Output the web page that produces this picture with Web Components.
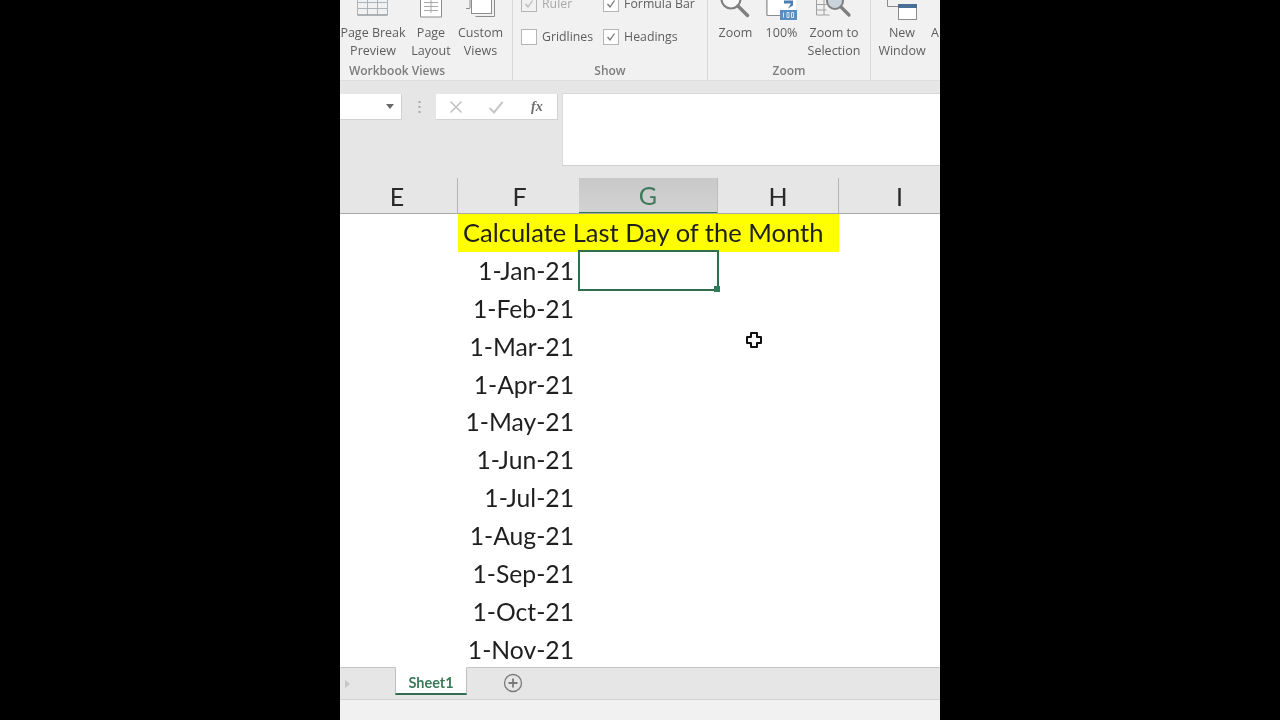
<!DOCTYPE html>
<html>
<head>
<meta charset="utf-8">
<title>Calculate Last Day of the Month</title>
<style>
  html, body { margin:0; height:100%; background:#000; overflow:hidden; }
  body { display:flex; justify-content:center; font-family:"Open Sans","Liberation Sans",sans-serif; }
</style>
</head>
<body>
<excel-app>
  <excel-ribbon>
    <ribbon-group label="Workbook Views" width="173" pad="0" label-pad="58">
      <ribbon-cmd width="66" icon="pagebreak">Page Break<br>Preview</ribbon-cmd>
      <ribbon-cmd width="50" icon="pagelayout">Page<br>Layout</ribbon-cmd>
      <ribbon-cmd width="49" icon="custom">Custom<br>Views</ribbon-cmd>
    </ribbon-group>
    <ribbon-group label="Show" width="195" pad="8">
      <check-col>
        <ribbon-check dim checked>Ruler</ribbon-check>
        <ribbon-check>Gridlines</ribbon-check>
      </check-col>
      <check-col>
        <ribbon-check checked>Formula Bar</ribbon-check>
        <ribbon-check checked>Headings</ribbon-check>
      </check-col>
    </ribbon-group>
    <ribbon-group label="Zoom" width="163" pad="5">
      <ribbon-cmd width="45" icon="zoom">Zoom</ribbon-cmd>
      <ribbon-cmd width="47" icon="hundred">100%</ribbon-cmd>
      <ribbon-cmd width="58" icon="selection">Zoom to<br>Selection</ribbon-cmd>
    </ribbon-group>
    <ribbon-group label="" width="69" pad="3">
      <ribbon-cmd width="56" icon="window">New<br>Window</ribbon-cmd>
      <ribbon-cmd width="10" icon="">A</ribbon-cmd>
    </ribbon-group>
  </excel-ribbon>
  <formula-bar></formula-bar>
  <column-headers></column-headers>
  <sheet-grid>
    <sheet-cell col="2" span="3" fill>Calculate Last Day of the Month</sheet-cell>
    <sheet-cell col="2" right>1-Jan-21</sheet-cell>
    <sheet-cell col="3" selected></sheet-cell>
    <sheet-cell col="2" right>1-Feb-21</sheet-cell>
    <sheet-cell col="2" right>1-Mar-21</sheet-cell>
    <sheet-cell col="2" right>1-Apr-21</sheet-cell>
    <sheet-cell col="2" right>1-May-21</sheet-cell>
    <sheet-cell col="2" right>1-Jun-21</sheet-cell>
    <sheet-cell col="2" right>1-Jul-21</sheet-cell>
    <sheet-cell col="2" right>1-Aug-21</sheet-cell>
    <sheet-cell col="2" right>1-Sep-21</sheet-cell>
    <sheet-cell col="2" right>1-Oct-21</sheet-cell>
    <sheet-cell col="2" right>1-Nov-21</sheet-cell>
  </sheet-grid>
  <sheet-tabs></sheet-tabs>
  <status-strip></status-strip>
</excel-app>

<script>
(() => {
  'use strict';

  const COLS = '118px 121px 139px 121px 121px';
  const CELL_FONT = 'Lato,"Liberation Sans",sans-serif';
  const UI_FONT = '"Open Sans","Liberation Sans",sans-serif';

  // ---------- ribbon icons, the ribbon is cut off by the top of the video ----------
  const ICONS = {
    pagebreak: `<svg width="34" height="16" viewBox="0 0 34 16" fill="none" stroke="#9a9a9a">
      <path d="M1.5 -6h30v21h-30zM1.5 2.5h30M1.5 8.5h30M11.5 -6v21M21.5 -6v21" stroke="#a9b4bd"/>
      <path d="M1.5 15h30" stroke="#8f8f8f"/></svg>`,
    pagelayout: `<svg width="24" height="18" viewBox="0 0 24 18" fill="none">
      <path d="M1.5 -6v23h21v-23" fill="#fff" stroke="#8c8c8c"/>
      <path d="M5 2.5h14M5 6.5h14M5 10.5h14M12 0v13" stroke="#a9a9a9"/></svg>`,
    custom: `<svg width="32" height="17" viewBox="0 0 32 17" fill="none">
      <path d="M1 8.5h4M5 -6v14" stroke="#8c8c8c"/>
      <path d="M10.5 16.5h19v-22" stroke="#8c8c8c"/>
      <rect x="6.5" y="-6" width="20" height="19.5" fill="#fff" stroke="#8c8c8c"/></svg>`,
    zoom: `<svg width="34" height="18" viewBox="0 0 34 18" fill="none" stroke="#7f7f7f">
      <circle cx="12" cy="-1" r="9.5" stroke-width="2.2" fill="#f7f7f7"/>
      <path d="M19 6l9.5 9.5" stroke-width="3.4" stroke-linecap="round"/></svg>`,
    hundred: `<svg width="32" height="21" viewBox="0 0 32 21" fill="none">
      <path d="M1 -6v21.500h14" fill="#fff" stroke="#8c8c8c"/>
      <path d="M1 -6h29v16H16v5.500H1z" fill="#fff"/>
      <path d="M1 -6v21.500h14" stroke="#8c8c8c"/>
      <path d="M18 3.500h7l-3 5 5-3v-5h-9z" fill="#4a7fb5"/>
      <rect x="14" y="10" width="17" height="10" fill="#5a8dc0"/>
      <path d="M17.500 12.500v5M21 12.500h2v5h-2zM25.500 12.500h2v5h-2z" stroke="#e6eef6" stroke-width=".9"/></svg>`,
    selection: `<svg width="38" height="18" viewBox="0 0 38 18" fill="none">
      <path d="M1.500 -4v19h13M1.500 4.500h10M1.500 10h10M9 -4v19" stroke="#a0a0a0"/>
      <circle cx="20" cy="1" r="8" fill="#c9d3dc" stroke="#7f7f7f" stroke-width="2"/>
      <path d="M26 7l8 8" stroke="#7f7f7f" stroke-width="3.200" stroke-linecap="round"/></svg>`,
    window: `<svg width="32" height="21" viewBox="0 0 32 21" fill="none">
      <path d="M1.500 -4v10.500h11" stroke="#8c8c8c"/>
      <path d="M20 -4v4" stroke="#8c8c8c"/>
      <rect x="12.500" y="4.500" width="18" height="15" fill="#fff" stroke="#8c8c8c"/>
      <rect x="12" y="4" width="19" height="4" fill="#4a6f96"/></svg>`
  };

  class ExcelApp extends HTMLElement {
    constructor() {
      super();
      this.attachShadow({ mode: 'open' }).innerHTML = `
        <style>
          :host{
            display:flex; flex-direction:column;
            width:600px; height:720px; overflow:hidden;
            background:#fff; position:relative;
            filter:blur(.45px);
          }
          .cursor{ position:absolute; left:405px; top:331px; }
        </style>
        <slot></slot>
        <svg class="cursor" width="18" height="18" viewBox="0 0 18 18">
          <path d="M6 2h6v4h4v6h-4v4H6v-4H2V6h4z" fill="#fff" stroke="#111" stroke-width="2" stroke-linejoin="round"/>
        </svg>`;
    }
  }

  class ExcelRibbon extends HTMLElement {
    constructor() {
      super();
      this.attachShadow({ mode: 'open' }).innerHTML = `
        <style>
          :host{
            display:flex; align-items:flex-end; flex:none;
            height:81px; overflow:hidden;
            background:#f1f1f1;
            border-bottom:1px solid #dedede; box-sizing:border-box;
          }
        </style>
        <slot></slot>`;
    }
  }

  class RibbonGroup extends HTMLElement {
    connectedCallback() {
      if (this.shadowRoot) return;
      const w = this.getAttribute('width');
      const pad = this.getAttribute('pad') || 0;
      const labelPad = this.getAttribute('label-pad') || 0;
      this.attachShadow({ mode: 'open' }).innerHTML = `
        <style>
          :host{
            display:flex; flex-direction:column; flex:none;
            width:${w}px; height:80px; box-sizing:border-box;
            border-right:1px solid #d8d8d8;
          }
          :host(:last-child){ border-right:0; }
          .body{ display:flex; flex:1; min-height:0; padding-left:${pad}px; align-items:flex-end; }
          .label{
            height:21px; flex:none; text-align:center; padding-right:${labelPad}px;
            font:600 12px/24px ${UI_FONT}; color:#7d7d7d;
          }
        </style>
        <div class="body"><slot></slot></div>
        <div class="label">${this.getAttribute('label')}</div>`;
    }
  }

  class RibbonCmd extends HTMLElement {
    connectedCallback() {
      if (this.shadowRoot) return;
      const icon = ICONS[this.getAttribute('icon')] || '';
      this.attachShadow({ mode: 'open' }).innerHTML = `
        <style>
          :host{
            display:flex; flex-direction:column; align-items:center; flex:none;
            width:${this.getAttribute('width')}px; height:80px; margin-bottom:-21px;
          }
          .icon{ height:24px; flex:none; display:flex; align-items:flex-start; justify-content:center; }
          .text{
            height:36px; white-space:nowrap; text-align:center;
            font:12.5px/18px ${UI_FONT}; color:#5e5e5e;
          }
          svg{ display:block; overflow:hidden; }
        </style>
        <div class="icon">${icon}</div>
        <div class="text"><slot></slot></div>`;
    }
  }

  class CheckCol extends HTMLElement {
    constructor() {
      super();
      this.attachShadow({ mode: 'open' }).innerHTML = `
        <style>
          :host{ display:flex; flex-direction:column; flex:none; gap:15px; margin-right:10px; padding-bottom:13px; }
        </style>
        <slot></slot>`;
    }
  }

  class RibbonCheck extends HTMLElement {
    connectedCallback() {
      if (this.shadowRoot) return;
      const checked = this.hasAttribute('checked');
      const dim = this.hasAttribute('dim');
      this.attachShadow({ mode: 'open' }).innerHTML = `
        <style>
          :host{
            display:flex; align-items:center; gap:5px; height:18px;
            font:12.300px/18px ${UI_FONT}; color:${dim ? '#a8a8a8' : '#5e5e5e'};
            white-space:nowrap;
          }
          .box{
            width:14px; height:14px; flex:none; background:${checked && dim ? '#f1f1f1' : '#fff'};
            border:1px solid #b5b5b5;
            display:flex;
          }
          svg{ display:block; }
        </style>
        <span class="box">${checked ? `<svg width="14" height="14" viewBox="0 0 14 14" fill="none">
          <path d="M3.500 7l2.500 3 4.500-6.500" stroke="${dim ? '#b8b8b8' : '#777'}" stroke-width="1.300"/></svg>` : ''}</span>
        <slot></slot>`;
    }
  }

  class FormulaBar extends HTMLElement {
    constructor() {
      super();
      this.attachShadow({ mode: 'open' }).innerHTML = `
        <style>
          :host{
            display:flex; align-items:flex-start; flex:none;
            height:97px; box-sizing:border-box; padding-top:13px;
            background:#e6e6e6;
          }
          .name{
            width:62px; height:26px; flex:none; box-sizing:border-box;
            background:#fff; border-bottom:1px solid #d2d2d2; border-right:1px solid #d2d2d2;
            display:flex; align-items:center; justify-content:flex-end; padding-right:6px;
          }
          .grip{ width:34px; height:26px; flex:none; display:flex; align-items:center; justify-content:center; }
          .fx{
            width:122px; height:26px; flex:none; box-sizing:border-box;
            background:#fff; border-bottom:1px solid #d2d2d2; border-right:1px solid #d2d2d2;
            display:flex; align-items:center;
          }
          .fx span{ flex:1; display:flex; align-items:center; justify-content:center; }
          .fx em{
            font:italic 600 14px/16px "Liberation Serif",serif; color:#6f6f6f;
          }
          .input{
            flex:1; height:73px; margin:-1px 0 0 4px;
            background:#fff; border-bottom:1px solid #cfcfcf; border-left:1px solid #dcdcdc;
            border-top:1px solid #d8d8d8; box-sizing:border-box;
          }
        </style>
        <div class="name">
          <svg width="10" height="6" viewBox="0 0 10 6"><path d="M1 0h8L5 5z" fill="#6a6a6a"/></svg>
        </div>
        <div class="grip">
          <svg width="3" height="14" viewBox="0 0 3 14" fill="#a8a8a8">
            <rect x=".5" y="1" width="2" height="2"/><rect x=".5" y="6" width="2" height="2"/><rect x=".5" y="11" width="2" height="2"/>
          </svg>
        </div>
        <div class="fx">
          <span><svg width="14" height="14" viewBox="0 0 14 14" fill="none" stroke="#c0c0c0" stroke-width="1.500"><path d="M1.500 1.500l11 11M12.500 1.500l-11 11"/></svg></span>
          <span><svg width="16" height="14" viewBox="0 0 16 14" fill="none" stroke="#c6c6c6" stroke-width="2"><path d="M1.500 8l4.500 4.500L14.500 2"/></svg></span>
          <span><em>fx</em></span>
        </div>
        <div class="input"></div>`;
    }
  }

  class ColumnHeaders extends HTMLElement {
    constructor() {
      super();
      const heads = ['E', 'F', 'G', 'H', 'I'];
      this.attachShadow({ mode: 'open' }).innerHTML = `
        <style>
          :host{
            display:grid; grid-template-columns:${COLS}; flex:none;
            height:36px; box-sizing:border-box; overflow:hidden;
            background:#e6e6e6; border-bottom:1px solid #a9a9a9;
          }
          div{
            display:flex; align-items:center; justify-content:center;
            font:25px/30px ${CELL_FONT}; color:#2a2a2a;
            border-right:1px solid #b4b4b4; box-sizing:border-box;
          }
          div:nth-of-type(1){ padding-right:3px; }
          div:nth-of-type(2){ border-right:0; padding-left:2px; }
          div:nth-of-type(5){ border-right:0; }
          .on{
            background:linear-gradient(#c9c9c9,#d2d2d2); color:#3f7a5c;
            border-bottom:2px solid #2f7a4a; margin-bottom:-1px; border-right:1px solid #bdbdbd;
          }
        </style>
        ${heads.map(h => `<div class="${h === 'G' ? 'on' : ''}">${h}</div>`).join('')}`;
    }
  }

  class SheetGrid extends HTMLElement {
    constructor() {
      super();
      this.attachShadow({ mode: 'open' }).innerHTML = `
        <style>
          :host{
            display:grid; grid-template-columns:${COLS}; grid-auto-rows:37.9px;
            flex:1; min-height:0; overflow:hidden; background:#fff;
            align-content:start;
          }
        </style>
        <slot></slot>`;
    }
  }

  class SheetCell extends HTMLElement {
    connectedCallback() {
      if (this.shadowRoot) return;
      const col = +this.getAttribute('col');
      const span = +this.getAttribute('span') || 1;
      const selected = this.hasAttribute('selected');
      // the selected cell shares its row with the date to the left of it
      this.style.gridColumn = `${col} / span ${span}`;
      this.attachShadow({ mode: 'open' }).innerHTML = `
        <style>
          :host{
            display:flex; align-items:center; position:relative; min-width:0;
            font:24.700px/34px ${CELL_FONT}; color:#1f1f1f; white-space:nowrap;
          }
          :host([right]){ justify-content:flex-end; padding-right:5px; }
          :host([fill]){ background:#ff0; padding:0 0 2px 5px; font-size:25.500px; }
          .sel{
            position:absolute; left:-1px; right:-1px; top:-2px; bottom:-1px;
            border:2px solid #2e6f4e; box-sizing:border-box;
          }
          .handle{
            position:absolute; right:-3px; bottom:-3px;
            width:6px; height:6px; background:#2e7d5a;
          }
        </style>
        <slot></slot>
        ${selected ? '<div class="sel"><div class="handle"></div></div>' : ''}`;
    }
  }

  class SheetTabs extends HTMLElement {
    constructor() {
      super();
      this.attachShadow({ mode: 'open' }).innerHTML = `
        <style>
          :host{
            display:flex; align-items:flex-start; flex:none;
            height:32px; box-sizing:border-box; position:relative;
            background:#e6e6e6; border-top:1px solid #c4c4c4;
          }
          .arrow{ width:55px; height:31px; flex:none; display:flex; align-items:center; padding-left:5px; box-sizing:border-box; }
          .tab{
            width:72px; height:28px; flex:none; box-sizing:border-box; margin-top:-1px;
            background:#fff; border:1px solid #bdbdbd; border-top-color:#fff; border-bottom:2px solid #2f6f4f;
            text-align:center; font:700 14.500px/29px ${CELL_FONT}; color:#3a7a5a;
          }
          .plus{ margin:5px 0 0 36px; display:block; }
        </style>
        <div class="arrow"><svg width="5" height="8" viewBox="0 0 5 8"><path d="M0 0l5 4-5 4z" fill="#c6c6c6"/></svg></div>
        <div class="tab">Sheet1</div>
        <svg class="plus" width="20" height="20" viewBox="0 0 20 20" fill="none" stroke="#7a7a7a">
          <circle cx="10" cy="10" r="8.500" stroke-width="1.300"/>
          <path d="M10 5.500v9M5.500 10h9" stroke-width="1.800"/>
        </svg>`;
    }
  }

  class StatusStrip extends HTMLElement {
    constructor() {
      super();
      this.attachShadow({ mode: 'open' }).innerHTML = `
        <style>
          :host{ display:block; flex:none; height:21px; box-sizing:border-box; background:#f1f1f1; border-top:1px solid #d2d2d2; }
        </style>`;
    }
  }

  customElements.define('excel-app', ExcelApp);
  customElements.define('excel-ribbon', ExcelRibbon);
  customElements.define('ribbon-group', RibbonGroup);
  customElements.define('ribbon-cmd', RibbonCmd);
  customElements.define('check-col', CheckCol);
  customElements.define('ribbon-check', RibbonCheck);
  customElements.define('formula-bar', FormulaBar);
  customElements.define('column-headers', ColumnHeaders);
  customElements.define('sheet-grid', SheetGrid);
  customElements.define('sheet-cell', SheetCell);
  customElements.define('sheet-tabs', SheetTabs);
  customElements.define('status-strip', StatusStrip);
})();
</script>
</body>
</html>
